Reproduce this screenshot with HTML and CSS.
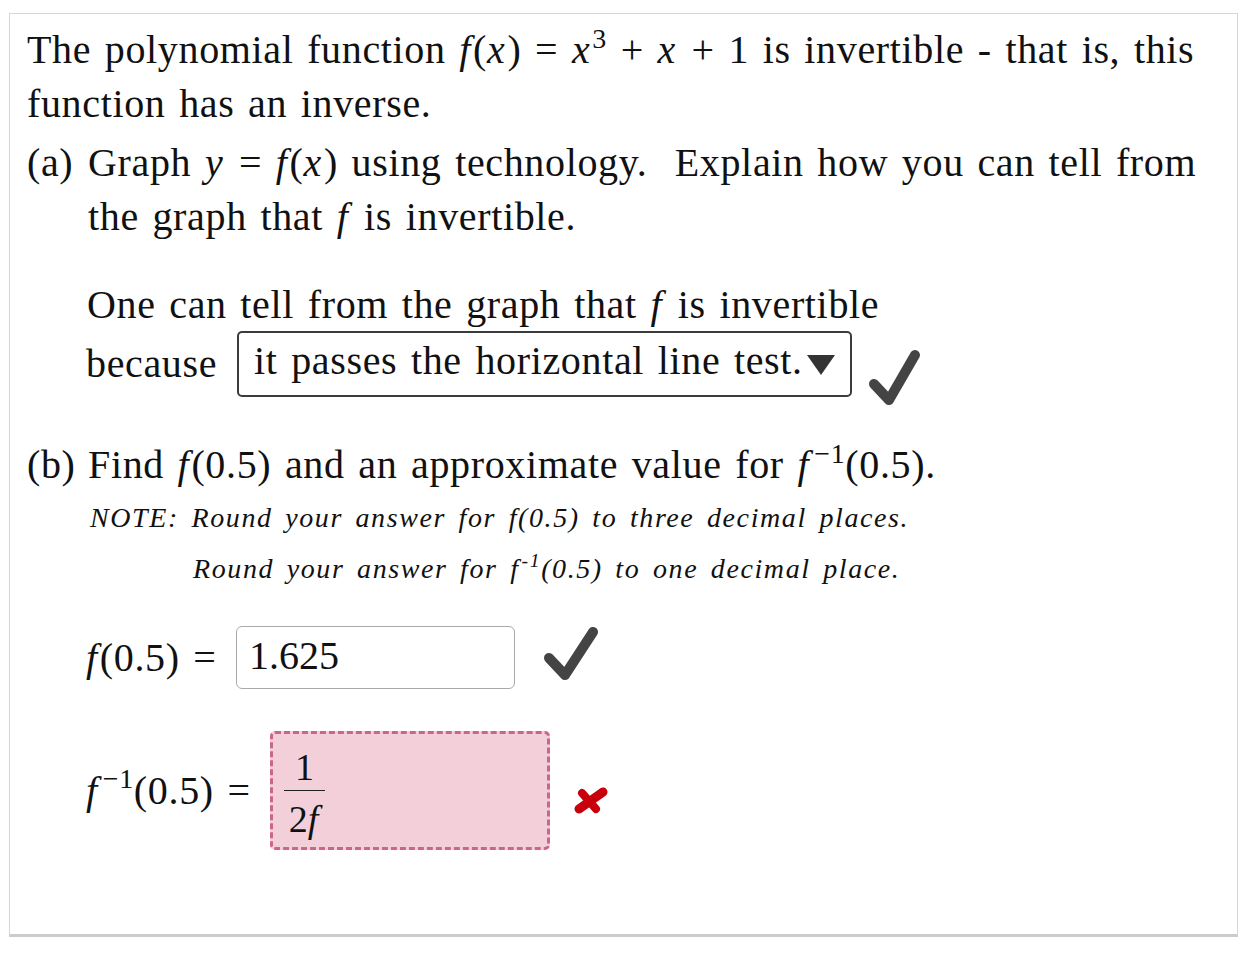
FILE: index.html
```html
<!DOCTYPE html>
<html>
<head>
<meta charset="utf-8">
<link rel="stylesheet" href="styles.css">
</head>
<body>
<div class="card">
  <p class="para"><span class="ln">The polynomial function <i>f</i>(<i>x</i>) = <i>x</i><sup>3</sup> + <i>x</i> + 1 is invertible - that is, this</span><span class="ln">function has an inverse.</span></p>

  <div class="part part-a">
    <span class="lbl">(a)</span>
    <div class="pbody"><span class="ln">Graph <i>y</i> = <i>f</i>(<i>x</i>) using technology.&nbsp; Explain how you can tell from</span><span class="ln">the graph that <i>f</i> is invertible.</span></div>
  </div>

  <div class="answer-a">
    <div class="ln">One can tell from the graph that <i>f</i> is invertible</div>
    <div class="row row-a">
      <span class="because">because</span>
      <div class="dropdown"><span class="dd-text">it passes the horizontal line test.</span><span class="tri"></span></div>
      <svg class="check check1" viewBox="0 0 56 61" width="56" height="61"><path d="M8 37 L23 53 L49 8" fill="none" stroke="#444" stroke-width="10" stroke-linecap="round" stroke-linejoin="round"/></svg>
    </div>
  </div>

  <div class="part part-b">
    <span class="lbl">(b)</span>
    <div class="pbody"><span class="ln">Find <i>f</i>(0.5) and an approximate value for <i>f</i><sup class="inv">−1</sup>(0.5).</span></div>
  </div>
  <div class="note">
    <span class="nl">NOTE: Round your answer for f(0.5) to three decimal places.</span>
    <span class="nl nl2">Round your answer for f<sup class="inv2">-1</sup>(0.5) to one decimal place.</span>
  </div>

  <div class="row row-f">
    <span class="flabel"><i>f</i>(0.5) =</span>
    <div class="inbox">1.625</div>
    <svg class="check check2" viewBox="0 0 60 57" width="60" height="57"><path d="M9 33 L25 50 L53 7" fill="none" stroke="#444" stroke-width="10" stroke-linecap="round" stroke-linejoin="round"/></svg>
  </div>

  <div class="row row-finv">
    <span class="flabel flabel2"><i>f</i><sup class="inv">−1</sup>(0.5) =</span>
    <div class="pinkbox">
      <div class="frac">
        <span class="num">1</span>
        <span class="bar"></span>
        <span class="den">2<i>f</i></span>
      </div>
    </div>
    <svg class="xmark" viewBox="0 0 36 27" width="36" height="27"><path d="M6 22 L30 5" fill="none" stroke="#c8000c" stroke-width="9" stroke-linecap="round"/><path d="M9 6 L23 22" fill="none" stroke="#c8000c" stroke-width="8" stroke-linecap="round"/></svg>
  </div>
</div>
</body>
</html>
```

FILE: styles.css
```css
html, body {
  margin: 0;
  padding: 0;
  background: #ffffff;
}

body {
  font-family: "Liberation Serif", "Times New Roman", serif;
  color: #111111;
}

.card {
  margin: 13px 0 0 9px;
  width: 1229px;
  height: 924px;
  box-sizing: border-box;
  border: 1px solid #d6d6d6;
  border-bottom: 3px solid #cccccc;
  padding: 9px 0 0 17px;
  font-size: 40px;
  line-height: 54px;
  letter-spacing: 0.65px;
  word-spacing: 3px;
}

.ln {
  display: block;
  white-space: nowrap;
}

i {
  font-style: italic;
  padding-right: 2px;
}

sup {
  font-size: 0.7em;
  line-height: 0;
  vertical-align: 0.55em;
}

sup.inv {
  margin-left: 3px;
}

sup.inv2 {
  margin-left: 2px;
}

.para {
  margin: 0;
}

.part {
  display: flex;
}

.part-a {
  margin-top: 5px;
}

.lbl {
  width: 61px;
  flex: none;
  white-space: nowrap;
}

.answer-a {
  margin-top: 34px;
  margin-left: 60px;
}

.row {
  display: flex;
  align-items: center;
}

.row-a {
  margin-top: -1px;
  height: 66px;
  margin-left: -1px;
}

.because {
  width: 151px;
  flex: none;
}

.dropdown {
  width: 615px;
  height: 66px;
  box-sizing: border-box;
  border: 2px solid #3c3c3c;
  border-radius: 5px;
  display: flex;
  align-items: center;
  padding: 0 0 6px 15px;
  white-space: nowrap;
}

.tri {
  width: 0;
  height: 0;
  border-left: 14px solid transparent;
  border-right: 14px solid transparent;
  border-top: 20px solid #333333;
  margin-left: 4px;
  margin-top: 8px;
}

.check1 {
  margin-left: 14px;
  align-self: flex-end;
  margin-bottom: -11px;
}

.part-b {
  margin-top: 41px;
}

.note {
  margin-left: 63px;
  font-size: 28px;
  line-height: 51px;
  font-style: italic;
  letter-spacing: 1.6px;
  word-spacing: 4px;
}

.nl {
  display: block;
  white-space: nowrap;
}

.nl2 {
  padding-left: 103px;
}

.row-f {
  margin-top: 32px;
  margin-left: 59px;
  height: 63px;
}

.flabel {
  width: 150px;
  flex: none;
  white-space: nowrap;
}

.inbox {
  width: 279px;
  height: 63px;
  box-sizing: border-box;
  border: 1.5px solid #aaaaaa;
  border-radius: 6px;
  padding: 0 0 4px 12px;
  display: flex;
  align-items: center;
  letter-spacing: 0;
}

.check2 {
  margin-left: 25px;
  align-self: flex-start;
  margin-top: -1px;
}

.row-finv {
  margin-top: 42px;
  margin-left: 59px;
  height: 119px;
}

.flabel2 {
  width: 184px;
}

.pinkbox {
  width: 280px;
  height: 119px;
  box-sizing: border-box;
  border: 3px dashed #cc6688;
  border-radius: 5px;
  background: #f3d0d9;
  padding: 6px 0 0 11px;
}

.frac {
  display: inline-flex;
  flex-direction: column;
  align-items: center;
  font-size: 38px;
  line-height: 40px;
  letter-spacing: 0;
}

.num,
.den {
  display: block;
  white-space: nowrap;
}

.bar {
  display: block;
  width: 41px;
  border-top: 1.5px solid #222222;
  margin-top: 3px;
}

.den {
  margin-top: 8px;
}

.xmark {
  margin-left: 23px;
  margin-top: 20px;
}
```
